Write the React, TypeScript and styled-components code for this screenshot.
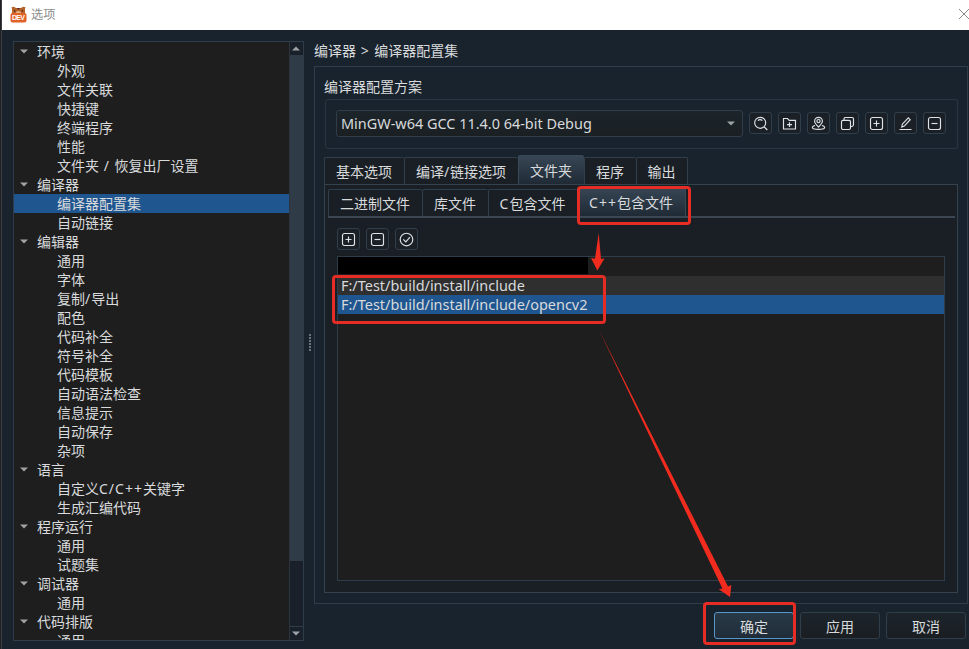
import React from "react";
import styled, { createGlobalStyle, css } from "styled-components";

const line = "#2e3d49";

const Global = createGlobalStyle`
  * { box-sizing: border-box; }
  body { margin: 0; overflow: hidden; background: #19232d; }
`;

const Screen = styled.div`
  position: relative;
  display: flex;
  width: 969px;
  height: 649px;
  overflow: hidden;
  font-family: "Noto Sans", "Noto Sans CJK SC", sans-serif;
  font-size: 14px;
  line-height: 19px;
  color: #d8dadc;
  white-space: pre;
`;

const BehindStrip = styled.div`
  width: 2px;
  background: #202020;
  border-right: 1px solid #3b3f43;
`;

const Dialog = styled.div`
  flex: 1;
  display: flex;
  flex-direction: column;
  min-width: 0;
  background: #19232d;
`;

const TitleBar = styled.header`
  display: flex;
  align-items: center;
  height: 30px;
  flex: none;
  padding: 0 0 2px 8px;
  background: #fff;
  color: #8c8c8c;
  font-size: 12.2px;
  gap: 4px;
  svg { flex: none; }
`;
const TitleText = styled.span`
  flex: 1;
`;
const CloseIcon = styled.svg`
  margin-right: -1px;
`;

const Body = styled.main`
  display: flex;
  flex: 1;
  min-height: 0;
  padding: 11px 0 0 11px;
`;

const TreeFrame = styled.nav`
  display: flex;
  width: 291px;
  height: 600px;
  border: 1px solid ${line};
  background: #1e1e1e;
`;

const TreeList = styled.div`
  flex: 1;
  overflow: hidden;
`;

const TreeRow = styled.div<{ $group?: boolean; $selected?: boolean }>`
  display: flex;
  align-items: center;
  height: 19px;
  padding-left: ${(p) => (p.$group ? 6 : 43)}px;
  gap: 9px;
  background: ${(p) => (p.$selected ? "#205690" : "transparent")};
`;

const Spaced = styled.span`
  letter-spacing: 1px;
`;

const ScrollBar = styled.div`
  display: flex;
  flex-direction: column;
  width: 14px;
  background: #19202a;
  border-left: 1px solid #2a3540;
`;
const ScrollButton = styled.div`
  display: flex;
  align-items: center;
  justify-content: center;
  height: 13px;
  padding-right: 1px;
  background: #19202a;
`;
const ScrollThumb = styled.div`
  height: 506px;
  background: #2f3c48;
`;
const ScrollTrack = styled.div`
  flex: 1;
  border-bottom: 1px solid ${line};
`;

const Splitter = styled.div`
  display: flex;
  flex-direction: column;
  align-items: center;
  width: 10px;
  height: 600px;
  padding-top: 293px;
  padding-left: 2px;
  gap: 1px;
`;
const Dot = styled.i`
  width: 2px;
  height: 2px;
  background: #69747e;
`;

const Content = styled.section`
  display: flex;
  flex-direction: column;
  width: 655px;
`;
const Breadcrumb = styled.div`
  height: 25px;
`;
const Page = styled.div`
  display: flex;
  flex-direction: column;
  width: 654px;
  height: 538px;
  border: 1px solid ${line};
  padding: 10px 9px 0 9px;
`;
const GroupTitle = styled.div`
  height: 22px;
`;
const GroupBox = styled.div`
  display: flex;
  align-items: center;
  width: 633px;
  height: 50px;
  margin-left: 1px;
  padding: 0 10px 2px 10px;
  border: 1px solid #2a3742;
  border-radius: 3px;
`;
const ComboBox = styled.div`
  display: flex;
  align-items: center;
  justify-content: space-between;
  width: 407px;
  height: 27px;
  margin-right: 6px;
  padding: 0 7px 0 4px;
  border: 1px solid ${line};
  border-radius: 3px;
  background: linear-gradient(#1c252b, #1a1f22);
  font-size: 14.45px;
`;
const ButtonRow = styled.div`
  display: flex;
  gap: 6px;
`;
const ToolButton = styled.button`
  display: flex;
  align-items: center;
  justify-content: center;
  width: 23px;
  height: 22px;
  padding: 0;
  border: 1px solid #303e4a;
  border-radius: 3px;
  background: #1a2026;
  color: #dfe3e6;
`;

const Tabs = styled.div<{ $nested?: boolean }>`
  display: flex;
  align-items: flex-end;
  height: ${(p) => (p.$nested ? 33 : 29)}px;
  margin-top: ${(p) => (p.$nested ? 0 : 6)}px;
  margin-left: ${(p) => (p.$nested ? 3 : 0)}px;
  border-bottom: ${(p) => (p.$nested ? "2px solid #3b4854" : "0")};
  margin-right: ${(p) => (p.$nested ? 2 : 0)}px;
`;
const Tab = styled.div<{ $w: number; $selected?: boolean }>`
  display: flex;
  align-items: center;
  justify-content: center;
  width: ${(p) => p.$w}px;
  height: 27px;
  padding: 0 1px 0 0;
  border: 1px solid #303e49;
  border-bottom: 0;
  border-right-width: 0;
  border-radius: 2px 2px 0 0;
  background: #1a1f25;
  &:last-child { border-right-width: 1px; }
  ${(p) =>
    p.$selected &&
    css`
      height: 29px;
      border-color: #3a4958;
      background: linear-gradient(#374655, #1f2a35);
    `}
`;
const TabPane = styled.div`
  display: flex;
  flex-direction: column;
  width: 634px;
  height: 409px;
  border: 1px solid #34424e;
  background: #1a1e25;
`;
const ListTools = styled(ButtonRow)`
  padding: 10px 0 0 12px;
  height: 38px;
`;
const PathList = styled.div`
  width: 608px;
  height: 325px;
  margin-left: 12px;
  border: 1px solid ${line};
  background: #1e1e1e;
  font-size: 14.45px;
`;
const PathRow = styled.div<{ $tone: "plain" | "alternate" | "selected" }>`
  height: 19px;
  padding-left: 3px;
  background: ${(p) => ({ plain: "transparent", alternate: "#2f2f2f", selected: "#205690" })[p.$tone]};
`;
const Redaction = styled.div`
  width: 250px;
  height: 17px;
  margin-left: -3px;
  background: #000;
`;

const Footer = styled.footer`
  display: flex;
  padding: 8px 0 0 400px;
  gap: 6px;
`;
const DialogButton = styled.button<{ $primary?: boolean }>`
  width: 80px;
  height: 27px;
  padding: 1px 0 0;
  border: 1px solid ${(p) => (p.$primary ? "#5796c9" : "#303e4a")};
  border-radius: 3px;
  background: ${(p) => (p.$primary ? "linear-gradient(#293947, #202d39)" : "linear-gradient(#1c242b, #1a1e22)")};
  color: inherit;
  font: inherit;
`;

const Highlight = styled.div<{ $x: number; $y: number; $w: number; $h: number }>`
  position: absolute;
  left: ${(p) => p.$x}px;
  top: ${(p) => p.$y}px;
  width: ${(p) => p.$w}px;
  height: ${(p) => p.$h}px;
  border: 3px solid #e62d25;
  border-radius: 4px;
`;
const Arrows = styled.svg`
  position: absolute;
  inset: 0;
  pointer-events: none;
`;

const Triangle = ({ up = false }: { up?: boolean }) => (
  <svg width="8" height="5" viewBox="0 0 8 5">
    <path d={up ? "M0 4.5L4 .5L8 4.5Z" : "M0 .5H8L4 4.5Z"} fill="#9da2a6" />
  </svg>
);

const AppLogo = () => (
  <svg width="17" height="17" viewBox="0 0 17 17">
    <path d="M2 8V3L1.5 1.2L4 .8L6 2H11L13 .8L15.5 1.2L15 3V8Z" fill="#b5622b" />
    <path d="M4 3.5L6 5L4 6ZM13 3.5L11 5L13 6ZM7 2L8.5 4L10 2Z" fill="#5b2e1b" />
    <path d="M6 6Q8.5 4 11 6V8H6Z" fill="#e7b184" />
    <rect x=".5" y="7" width="16" height="9.5" rx="2" fill="#df6227" />
    <text x="8.5" y="14.4" textAnchor="middle" textLength="13" fontFamily="Liberation Sans" fontWeight="bold" fontSize="7" fill="#fff">DEV</text>
  </svg>
);

const glyphs = {
  search: <><circle cx="7.2" cy="6.8" r="5.5" /><path d="M11.3 11L14.3 14M4.8 4.6Q7 2.8 9.4 4.5" /></>,
  folder: <path d="M1.5 2.5H5.5L7.2 4.3H13.5V13H1.5ZM7.5 6.2V11M5 8.6H10" />,
  locate: <><path d="M7.5 11C5 8.5 3.6 7 3.6 5.2A3.9 3.9 0 0 1 11.4 5.2C11.4 7 10 8.5 7.5 11Z" /><circle cx="7.5" cy="5.1" r="1.6" /><path d="M4 9.5C1.8 10.2 1 11.2 1.5 12C2.5 13.8 12.5 13.8 13.5 12C14 11.2 13.2 10.2 11 9.5" /></>,
  copy: <><rect x="1.5" y="4.3" width="9" height="9.2" rx="1.5" /><path d="M4 4V3Q4 1.5 5.5 1.5H12Q13.5 1.5 13.5 3V8.5Q13.5 10 12 10.5H11" /></>,
  plus: <><rect x="1.5" y="1.5" width="12" height="12" rx="2" /><path d="M7.5 4.5V10.5M4.5 7.5H10.5" /></>,
  edit: <path d="M1.5 13.5H13.5M3.8 11L4.3 8.2L10.3 1.8L12.2 3.7L6.3 10.1Z" />,
  minus: <><rect x="1.5" y="1.5" width="12" height="12" rx="2" /><path d="M4.5 7.5H10.5" /></>,
  check: <><circle cx="7.5" cy="7.5" r="6.3" /><path d="M4.3 7.3L6.8 9.8L11 5.2" /></>,
};

const Icon = ({ name }: { name: keyof typeof glyphs }) => (
  <svg width="15" height="15" viewBox="0 0 15 15" fill="none" stroke="currentColor" strokeWidth="1.15">{glyphs[name]}</svg>
);

const tree: [string, string[]][] = [
  ["环境", ["外观", "文件关联", "快捷键", "终端程序", "性能", "文件夹 / 恢复出厂设置"]],
  ["编译器", ["编译器配置集", "自动链接"]],
  ["编辑器", ["通用", "字体", "复制/导出", "配色", "代码补全", "符号补全", "代码模板", "自动语法检查", "信息提示", "自动保存", "杂项"]],
  ["语言", ["自定义C/C++关键字", "生成汇编代码"]],
  ["程序运行", ["通用", "试题集"]],
  ["调试器", ["通用"]],
  ["代码排版", ["通用"]],
];
const toolbar: (keyof typeof glyphs)[] = ["search", "folder", "locate", "copy", "plus", "edit", "minus"];
const listTools: (keyof typeof glyphs)[] = ["plus", "minus", "check"];

// Latin runs inside Chinese labels are set slightly wider than the ideographs.
const Label = ({ text }: { text: string }) => (
  <span>
    {text.split(/([ -~]+)/).map((part, i) => (i % 2 ? <Spaced key={i}>{part}</Spaced> : part))}
  </span>
);

export default function App() {
  return (
    <>
      <Global />
      <Screen>
        <BehindStrip />
        <Dialog>
          <TitleBar>
            <AppLogo />
            <TitleText>选项</TitleText>
            <CloseIcon width="12" height="12" viewBox="0 0 12 12"><path d="M1 1L11 11M11 1L1 11" stroke="#888" fill="none" /></CloseIcon>
          </TitleBar>
          <Body>
            <TreeFrame>
              <TreeList>
                {tree.map(([group, items]) => (
                  <React.Fragment key={group}>
                    <TreeRow $group><Triangle />{group}</TreeRow>
                    {items.map((item) => (
                      <TreeRow key={item} $selected={item === "编译器配置集"}><Label text={item} /></TreeRow>
                    ))}
                  </React.Fragment>
                ))}
              </TreeList>
              <ScrollBar>
                <ScrollButton><Triangle up /></ScrollButton>
                <ScrollThumb />
                <ScrollTrack />
                <ScrollButton><Triangle /></ScrollButton>
              </ScrollBar>
            </TreeFrame>
            <Splitter>{Array.from({ length: 6 }, (_, i) => <Dot key={i} />)}</Splitter>
            <Content>
              <Breadcrumb><Label text="编译器 > 编译器配置集" /></Breadcrumb>
              <Page>
                <GroupTitle>编译器配置方案</GroupTitle>
                <GroupBox>
                  <ComboBox>MinGW-w64 GCC 11.4.0 64-bit Debug<Triangle /></ComboBox>
                  <ButtonRow>{toolbar.map((n) => <ToolButton key={n}><Icon name={n} /></ToolButton>)}</ButtonRow>
                </GroupBox>
                <Tabs>
                  <Tab $w={80}>基本选项</Tab>
                  <Tab $w={114}><Label text="编译/链接选项" /></Tab>
                  <Tab $w={66} $selected>文件夹</Tab>
                  <Tab $w={52}>程序</Tab>
                  <Tab $w={52}>输出</Tab>
                </Tabs>
                <TabPane>
                  <Tabs $nested>
                    <Tab $w={94}>二进制文件</Tab>
                    <Tab $w={66}>库文件</Tab>
                    <Tab $w={89}><Label text="C包含文件" /></Tab>
                    <Tab $w={109} $selected><Label text="C++包含文件" /></Tab>
                  </Tabs>
                  <ListTools>{listTools.map((n) => <ToolButton key={n}><Icon name={n} /></ToolButton>)}</ListTools>
                  <PathList>
                    <PathRow $tone="plain"><Redaction /></PathRow>
                    <PathRow $tone="alternate">F:/Test/build/install/include</PathRow>
                    <PathRow $tone="selected">F:/Test/build/install/include/opencv2</PathRow>
                  </PathList>
                </TabPane>
              </Page>
              <Footer>
                <DialogButton $primary>确定</DialogButton>
                <DialogButton>应用</DialogButton>
                <DialogButton>取消</DialogButton>
              </Footer>
            </Content>
          </Body>
        </Dialog>
        <Highlight $x={577} $y={186} $w={114} $h={39} />
        <Highlight $x={332} $y={275} $w={274} $h={49} />
        <Highlight $x={703} $y={602} $w={93} $h={43} />
        <Arrows width="969" height="649" viewBox="0 0 969 649" fill="#f12c1e">
          <path d="M598.7 233L601 259L604.5 258.5L597.3 270.5L591 258L595 258.7Z" />
          <path d="M599 330L728 586.5L731.3 585L730 597L718.5 589L722.5 588.7Z" />
        </Arrows>
      </Screen>
    </>
  );
}
